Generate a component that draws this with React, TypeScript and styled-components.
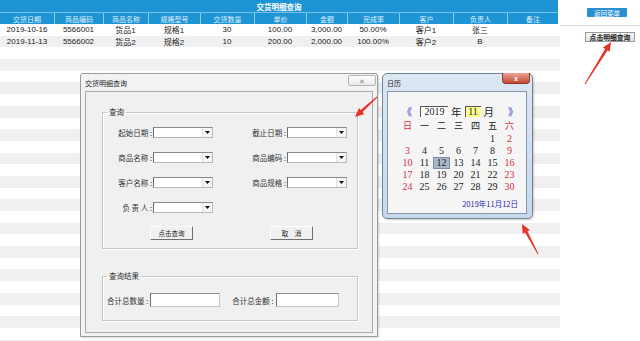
import React from 'react';
import styled, { createGlobalStyle } from 'styled-components';

const GlobalStyle = createGlobalStyle`
  html, body { margin: 0; padding: 0; background: #fff; }
  body { font-family: "Liberation Sans", "Noto Sans CJK SC", sans-serif; }
`;

const cjk = '"Noto Sans CJK SC", "Liberation Sans", sans-serif';
const serif = '"Liberation Serif", "Noto Sans CJK SC", serif';
const cols = '54px 49px 45px 52px 54px 52px 41px 52px 54px 54px 51px';

const headers = ['交货日期', '商品编码', '商品名称', '规格型号', '交货数量', '单价', '金额', '完成率', '客户', '负责人', '备注'];
const records = [
  ['2019-10-16', '5566001', '货品1', '规格1', '30', '100.00', '3,000.00', '50.00%', '客户1', '张三', ''],
  ['2019-11-13', '5566002', '货品2', '规格2', '10', '200.00', '2,000.00', '100.00%', '客户2', 'B', ''],
];

const Page = styled.div`
  position: relative;
  width: 640px;
  height: 341px;
  overflow: hidden;
  display: flex;
  background: #fff;
`;

const Sheet = styled.div`
  width: 560px;
  height: 341px;
  display: flex;
  flex-direction: column;
  overflow: hidden;
`;

const SheetTitle = styled.div`
  width: 558px;
  height: 12px;
  flex-shrink: 0;
  background: #1f94d5;
  color: #fff;
  font-family: ${cjk};
  font-size: 7.5px;
  font-weight: bold;
  display: flex;
  align-items: center;
  justify-content: center;
`;

const HeaderRow = styled.div`
  width: 558px;
  height: 12px;
  flex-shrink: 0;
  box-sizing: border-box;
  border-top: 1px solid #79bfe8;
  display: grid;
  grid-template-columns: ${cols};
  background: #1f94d5;
`;

const HeadCell = styled.div`
  color: #dff0fb;
  font-family: ${cjk};
  font-size: 7px;
  display: flex;
  align-items: center;
  justify-content: center;
  border-left: 1px solid #8ccaec;
  &:first-child { border-left: none; }
`;

const Row = styled.div<{ $shade: boolean }>`
  width: 560px;
  height: 11.7px;
  flex-shrink: 0;
  display: grid;
  grid-template-columns: ${cols};
  background: ${p => (p.$shade ? '#f0f0f0' : '#fff')};
`;

const Cell = styled.div`
  color: #222;
  font-size: 8px;
  font-family: "Liberation Sans", "Noto Sans CJK SC", sans-serif;
  display: flex;
  align-items: center;
  justify-content: center;
  white-space: nowrap;
`;

const Side = styled.div`
  flex: 1;
  display: flex;
  flex-direction: column;
  align-items: flex-start;
`;

const MenuButton = styled.div`
  margin: 8px 0 0 27px;
  width: 40px;
  height: 9px;
  background: #2a8fd1;
  border-radius: 1px;
  color: #fff;
  font-family: ${cjk};
  font-size: 6.5px;
  display: flex;
  align-items: center;
  justify-content: center;
`;

const SideRule = styled.div`
  margin-top: 8px;
  width: 100%;
  height: 1px;
  background: #d9d9d9;
`;

const DetailButton = styled.div`
  margin: 6px 0 0 25px;
  width: 50px;
  height: 10px;
  box-sizing: border-box;
  background: linear-gradient(#f7f7f7, #e2e2e2);
  border: 1px solid #9a9a9a;
  color: #222;
  font-family: ${cjk};
  font-size: 6.8px;
  font-weight: bold;
  display: flex;
  align-items: center;
  justify-content: center;
`;

/* ---------- query dialog ---------- */

const Dialog = styled.div`
  position: absolute;
  left: 80px;
  top: 73px;
  width: 298px;
  height: 264px;
  box-sizing: border-box;
  border: 1px solid #9b9b9b;
  border-radius: 3px 3px 0 0;
  background: #f3f3f3;
  box-shadow: 1px 1px 2px rgba(0, 0, 0, 0.15);
  padding: 0 4px 3px 4px;
  display: flex;
  flex-direction: column;
  font-family: ${cjk};
  color: #333;
`;

const TitleBar = styled.div`
  height: 17px;
  flex-shrink: 0;
  display: flex;
  align-items: flex-start;
  justify-content: space-between;
`;

const TitleText = styled.span`
  margin-top: 4px;
  font-size: 7px;
  color: #222;
`;

const GrayClose = styled.div`
  margin: 1px -3px 0 0;
  width: 28px;
  height: 11px;
  box-sizing: border-box;
  border: 1px solid #b4b4b4;
  border-radius: 2px;
  background: linear-gradient(#fdfdfd, #eaeaea);
  color: #8a8a8a;
  font-size: 7px;
  display: flex;
  align-items: center;
  justify-content: center;
`;

const Client = styled.div`
  flex: 1;
  border: 1px solid #a9a9a9;
  background: #f0f0f0;
  padding: 20px 14px 0 16px;
  display: flex;
  flex-direction: column;
  gap: 27px;
`;

const Group = styled.div<{ $h: number }>`
  position: relative;
  height: ${p => p.$h}px;
  box-sizing: border-box;
  border: 1px solid #c6c6c6;
  box-shadow: inset 1px 1px 0 #fff, 1px 1px 0 #fff;
`;

const Legend = styled.span`
  position: absolute;
  top: -6px;
  left: 4px;
  padding: 0 2px;
  background: #f0f0f0;
  font-size: 7.5px;
  line-height: 10px;
  color: #333;
`;

const FieldGrid = styled.div`
  padding: 14px 0 0 12px;
  display: grid;
  grid-template-columns: 38px 60px 74px 60px;
  grid-auto-rows: 11px;
  row-gap: 14px;
`;

const Label = styled.div`
  font-size: 7.5px;
  display: flex;
  align-items: center;
  justify-content: flex-end;
  white-space: nowrap;
  padding-right: 1px;
`;

const Combo = styled.div`
  box-sizing: border-box;
  height: 11px;
  background: #fff;
  border: 1px solid #b9b9b9;
  border-left-color: #6b6b6b;
  border-top-color: #8a8a8a;
  display: flex;
  justify-content: flex-end;
`;

const ComboArrow = styled.div`
  width: 9px;
  border-left: 1px solid #e0e0e0;
  background: #f6f6f6;
  display: flex;
  align-items: center;
  justify-content: center;
`;

const ButtonRow = styled.div`
  margin-top: 13px;
  padding-left: 47px;
  display: flex;
  gap: 77px;
`;

const BevelButton = styled.div`
  width: 43px;
  height: 14px;
  box-sizing: border-box;
  background: #f0f0f0;
  border: 1px solid;
  border-color: #fff #6f6f6f #6f6f6f #fff;
  font-size: 6.5px;
  color: #222;
  display: flex;
  align-items: center;
  justify-content: center;
`;

const ResultRow = styled.div`
  padding: 16px 0 0 4px;
  display: flex;
  align-items: center;
`;

const TextBox = styled.div<{ $w: number }>`
  width: ${p => p.$w}px;
  height: 14px;
  box-sizing: border-box;
  background: #fff;
  border: 1px solid #c4c4c4;
  border-left-color: #707070;
  border-top-color: #8d8d8d;
`;

const ResultLabel = styled(Label)<{ $gap?: number }>`
  height: 14px;
  margin-left: ${p => p.$gap ?? 0}px;
  padding-right: 2px;
`;

/* ---------- calendar ---------- */

const Calendar = styled.div`
  position: absolute;
  left: 382px;
  top: 73px;
  width: 151px;
  height: 146px;
  box-sizing: border-box;
  border: 1px solid #6f8399;
  border-radius: 5px;
  background: linear-gradient(#dbe7f3, #c6d8ea);
  box-shadow: 1px 1px 2px rgba(0, 0, 0, 0.2);
  padding: 0 5px 4px 4px;
  display: flex;
  flex-direction: column;
  font-family: ${cjk};
`;

const RedClose = styled.div`
  margin: -1px -3px 0 0;
  width: 28px;
  height: 11px;
  box-sizing: border-box;
  border: 1px solid #8b3b2f;
  border-top: none;
  border-radius: 0 0 4px 4px;
  background: linear-gradient(#eaa596, #c5482f);
  color: #fff;
  font-size: 7px;
  font-weight: bold;
  display: flex;
  align-items: center;
  justify-content: center;
`;

const CalBody = styled.div`
  flex: 1;
  border: 1px solid #8497ae;
  background: #f5f5f5;
  padding: 14px 8px 0 11px;
  display: flex;
  flex-direction: column;
`;

const NavRow = styled.div`
  height: 11px;
  display: flex;
  align-items: center;
  font-size: 10.5px;
  color: #222;
`;

const NavArrow = styled.span<{ $right?: boolean }>`
  color: #6e6ecf;
  font-size: 10px;
  font-weight: bold;
  margin-left: ${p => (p.$right ? 'auto' : '3px')};
`;

const SpinBox = styled.div<{ $w: number; $yellow?: boolean }>`
  width: ${p => p.$w}px;
  height: 11px;
  box-sizing: border-box;
  border-top: 1px solid #555;
  border-left: 1px solid #555;
  background: ${p => (p.$yellow ? '#ffff8c' : '#fff')};
  font-family: ${serif};
  font-size: 10px;
  line-height: 10px;
  text-align: center;
`;

const NavWord = styled.span`
  margin: 0 3px;
`;

const DayGrid = styled.div`
  display: grid;
  grid-template-columns: repeat(7, 17px);
  grid-template-rows: 14px repeat(5, 12.2px);
  margin-top: 1px;
`;

const WeekName = styled.div<{ $red: boolean }>`
  font-size: 9px;
  color: ${p => (p.$red ? '#d3313b' : '#222')};
  display: flex;
  align-items: center;
  justify-content: center;
`;

const Day = styled.div<{ $red: boolean; $sel: boolean }>`
  font-family: ${serif};
  font-size: 10px;
  color: ${p => (p.$red ? '#d3313b' : '#222')};
  display: flex;
  align-items: center;
  justify-content: center;
  box-sizing: border-box;
  margin: ${p => (p.$sel ? '1px 0 0 0' : '0')};
  background: ${p => (p.$sel ? '#aab7c6' : 'transparent')};
  border: ${p => (p.$sel ? '1px solid #7d8c9e' : 'none')};
`;

const Today = styled.div`
  margin-top: 5px;
  text-align: right;
  font-size: 7.5px;
  color: #2b2bb0;
`;

/* ---------- annotation arrows ---------- */

const Overlay = styled.svg`
  position: absolute;
  left: 0;
  top: 0;
  pointer-events: none;
`;

const arrowPoints = (x1: number, y1: number, x2: number, y2: number) => {
  const len = Math.hypot(x2 - x1, y2 - y1);
  const dx = (x2 - x1) / len;
  const dy = (y2 - y1) / len;
  const px = -dy;
  const py = dx;
  const nx = x2 - dx * 9;
  const ny = y2 - dy * 9;
  const p = (x: number, y: number, k: number) => `${(x + px * k).toFixed(1)},${(y + py * k).toFixed(1)}`;
  return [p(x1, y1, 0.5), p(nx, ny, 1.4), p(nx, ny, 4), `${x2},${y2}`, p(nx, ny, -4), p(nx, ny, -1.4), p(x1, y1, -0.5)].join(' ');
};

const arrows = [
  [585, 84, 611, 42],
  [377, 97, 355, 117],
  [538, 254, 522, 224],
];

const weekNames = ['日', '一', '二', '三', '四', '五', '六'];
const days: (number | null)[] = [null, null, null, null, null, 1, 2];
for (let d = 3; d <= 30; d++) days.push(d);

const Caret = () => (
  <svg width="5" height="3" viewBox="0 0 5 3">
    <path d="M0 0h5L2.5 3z" fill="#111" />
  </svg>
);

const Field = ({ label }: { label: string }) => (
  <>
    <Label>{label}</Label>
    <Combo>
      <ComboArrow><Caret /></ComboArrow>
    </Combo>
  </>
);

export default function App() {
  const stripes = Array.from({ length: 26 }, (_, i) => i);
  return (
    <Page>
      <GlobalStyle />
      <Sheet>
        <SheetTitle>交货明细查询</SheetTitle>
        <HeaderRow>
          {headers.map(h => <HeadCell key={h}>{h}</HeadCell>)}
        </HeaderRow>
        {records.map((r, i) => (
          <Row key={i} $shade={i % 2 === 1}>
            {r.map((c, j) => <Cell key={j}>{c}</Cell>)}
          </Row>
        ))}
        {stripes.map(i => <Row key={'s' + i} $shade={i % 2 === 1} />)}
      </Sheet>

      <Side>
        <MenuButton>返回菜单</MenuButton>
        <SideRule />
        <DetailButton>点击明细查询</DetailButton>
      </Side>

      <Dialog>
        <TitleBar>
          <TitleText>交货明细查询</TitleText>
          <GrayClose>✕</GrayClose>
        </TitleBar>
        <Client>
          <Group $h={137}>
            <Legend>查询</Legend>
            <FieldGrid>
              <Field label="起始日期 :" />
              <Field label="截止日期 :" />
              <Field label="商品名称 :" />
              <Field label="商品编码 :" />
              <Field label="客户名称 :" />
              <Field label="商品规格 :" />
              <Field label="负 责 人 :" />
            </FieldGrid>
            <ButtonRow>
              <BevelButton>点击查询</BevelButton>
              <BevelButton>取　消</BevelButton>
            </ButtonRow>
          </Group>
          <Group $h={45}>
            <Legend>查询结果</Legend>
            <ResultRow>
              <ResultLabel>合计总数量 :</ResultLabel>
              <TextBox $w={70} />
              <ResultLabel $gap={12}>合计总金额 :</ResultLabel>
              <TextBox $w={63} />
            </ResultRow>
          </Group>
        </Client>
      </Dialog>

      <Calendar>
        <TitleBar>
          <TitleText>日历</TitleText>
          <RedClose>x</RedClose>
        </TitleBar>
        <CalBody>
          <NavRow>
            <NavArrow>《</NavArrow>
            <SpinBox $w={28} style={{ marginLeft: 8 }}>2019</SpinBox>
            <NavWord>年</NavWord>
            <SpinBox $w={16} $yellow>11</SpinBox>
            <NavWord>月</NavWord>
            <NavArrow $right>》</NavArrow>
          </NavRow>
          <DayGrid>
            {weekNames.map((w, i) => <WeekName key={w} $red={i === 0 || i === 6}>{w}</WeekName>)}
            {days.map((d, i) => (
              <Day key={i} $red={i % 7 === 0 || i % 7 === 6} $sel={d === 12}>{d ?? ''}</Day>
            ))}
          </DayGrid>
          <Today>2019年11月12日</Today>
        </CalBody>
      </Calendar>

      <Overlay width="640" height="341" viewBox="0 0 640 341">
        {arrows.map(([x1, y1, x2, y2], i) => (
          <polygon key={i} points={arrowPoints(x1, y1, x2, y2)} fill="#e8332b" />
        ))}
      </Overlay>
    </Page>
  );
}
